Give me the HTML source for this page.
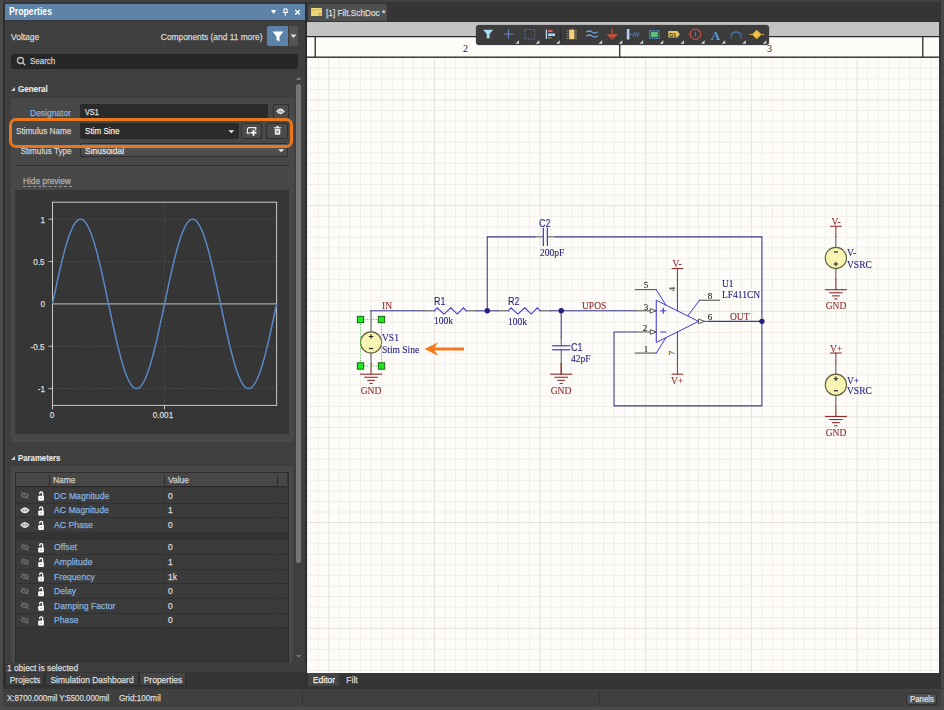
<!DOCTYPE html>
<html><head><meta charset="utf-8">
<style>
*{margin:0;padding:0;box-sizing:border-box}
html,body{width:944px;height:710px;overflow:hidden;background:#4a4a4a}
body{position:relative;font-family:"Liberation Sans",sans-serif}
.a{position:absolute}
.t{position:absolute;white-space:nowrap}
svg{position:absolute;overflow:visible}
</style></head><body>
<div class="a" style="left:0px;top:0px;width:944px;height:2px;background:#414141;"></div>
<div class="a" style="left:0px;top:2px;width:944px;height:2px;background:#363636;"></div>
<div class="a" style="left:3px;top:3px;width:2px;height:686px;background:#2f2f2f;"></div>
<div class="a" style="left:5px;top:4px;width:301px;height:668px;background:#3f3f3f;"></div>
<div class="a" style="left:5px;top:4px;width:300px;height:16px;background:#5d83a7;"></div>
<div class="a" style="left:5px;top:20px;width:300px;height:1px;background:#343a40;"></div>
<div class="a" style="left:305px;top:3px;width:2px;height:686px;background:#2d2d2d;"></div>
<div class="t" style="left:9px;top:6.45px;font:bold 10px/11.50px 'Liberation Sans';color:#ffffff;transform:scaleX(0.87);transform-origin:0 50%;">Properties</div>
<svg style="left:0;top:0" width="944" height="30">
<path d="M271 10 L276.3 10 L273.6 14 Z" fill="#ffffff"/>
<path d="M283.5 9 h4 M284 9 v3.5 M287 9 v3.5 M282.8 12.5 h5.2 M285.4 12.5 v3.2" stroke="#fff" stroke-width="1.1" fill="none"/>
<path d="M295.2 10 L299.8 14.6 M299.8 10 L295.2 14.6" stroke="#fff" stroke-width="1.4"/>
</svg>
<div class="t" style="left:11px;top:32.14px;font:normal 9.5px/10.92px 'Liberation Sans';color:#d6d6d6;transform:scaleX(0.89);transform-origin:0 50%;-webkit-text-stroke:0.25px #d6d6d6;">Voltage</div>
<div class="t" style="right:681.3px;top:31.74px;font:normal 9.5px/10.92px 'Liberation Sans';color:#d6d6d6;transform:scaleX(0.88);transform-origin:100% 50%;-webkit-text-stroke:0.25px #d6d6d6;">Components (and 11 more)</div>
<div class="a" style="left:267px;top:26px;width:21px;height:20px;background:#5b82a8;border-radius:2px 0 0 2px"></div>
<div class="a" style="left:289px;top:26px;width:9px;height:20px;background:#545454;border-radius:0 2px 2px 0"></div>
<svg style="left:0;top:0" width="944" height="60">
<path d="M272.5 31.5 h11 l-4 5 v5 l-3 -1.5 v-3.5 z" fill="#fff"/>
<path d="M290.5 34.5 h6 l-3 3.5 z" fill="#ddd"/>
</svg>
<div class="a" style="left:11px;top:54px;width:287px;height:14.7px;background:#272727;border-radius:3px"></div>
<svg style="left:0;top:0" width="100" height="80">
<circle cx="20.5" cy="60.5" r="3" stroke="#bdbdbd" stroke-width="1.3" fill="none"/>
<path d="M22.7 62.7 L25.3 65.3" stroke="#bdbdbd" stroke-width="1.5"/>
</svg>
<div class="t" style="left:30px;top:56.44px;font:normal 9.5px/10.92px 'Liberation Sans';color:#cfcfcf;transform:scaleX(0.84);transform-origin:0 50%;-webkit-text-stroke:0.25px #cfcfcf;">Search</div>
<svg style="left:0;top:0" width="310" height="700">
<path d="M296 80 L298.8 77 L301.5 80 Z" fill="#777"/>
<path d="M296 655 L298.8 658 L301.5 655 Z" fill="#777"/>
</svg>
<div class="a" style="left:296px;top:84px;width:4.6px;height:479px;background:#767676;border-radius:2.3px"></div>
<svg style="left:0;top:0" width="100" height="500">
<path d="M11 91 L15 87 L15 91 Z" fill="#cfcfcf"/>
<path d="M11 460 L15 456 L15 460 Z" fill="#cfcfcf"/>
</svg>
<div class="t" style="left:17.6px;top:84.04px;font:bold 9.5px/10.92px 'Liberation Sans';color:#e6e6e6;transform:scaleX(0.84);transform-origin:0 50%;-webkit-text-stroke:0.15px #e6e6e6;">General</div>
<div class="a" style="left:11px;top:97.5px;width:283px;height:344px;background:#484848;border-radius:3px"></div>
<div class="t" style="right:872.6px;top:107.64px;font:normal 9.5px/10.92px 'Liberation Sans';color:#8ab0dc;transform:scaleX(0.89);transform-origin:100% 50%;-webkit-text-stroke:0.25px #8ab0dc;">Designator</div>
<div class="a" style="left:80px;top:104px;width:187.8px;height:15.2px;background:#2a2a2a;border-radius:2px"></div>
<div class="t" style="left:84.5px;top:107.34px;font:normal 9.5px/10.92px 'Liberation Sans';color:#e0e0e0;transform:scaleX(0.76);transform-origin:0 50%;-webkit-text-stroke:0.25px #e0e0e0;">VS1</div>
<div class="a" style="left:272.5px;top:103.6px;width:16px;height:15.4px;background:#4b4b4b;border:1px solid #2f2f2f;border-radius:2px"></div>
<div class="t" style="right:872.8px;top:126.44px;font:normal 9.5px/10.92px 'Liberation Sans';color:#d2d2d2;transform:scaleX(0.86);transform-origin:100% 50%;-webkit-text-stroke:0.25px #d2d2d2;">Stimulus Name</div>
<div class="a" style="left:80px;top:123px;width:159px;height:16px;background:#2a2a2a;border-radius:2px"></div>
<div class="t" style="left:84.5px;top:126.34px;font:normal 9.5px/10.92px 'Liberation Sans';color:#e6e6e6;transform:scaleX(0.85);transform-origin:0 50%;-webkit-text-stroke:0.25px #e6e6e6;">Stim Sine</div>
<div class="a" style="left:240.6px;top:123.2px;width:21.6px;height:16.1px;background:#4b4b4b;border:1px solid #2f2f2f;border-radius:2px"></div>
<div class="a" style="left:266.4px;top:123.2px;width:21.8px;height:16.1px;background:#4b4b4b;border:1px solid #2f2f2f;border-radius:2px"></div>
<div class="t" style="right:872.8px;top:145.64px;font:normal 9.5px/10.92px 'Liberation Sans';color:#d2d2d2;transform:scaleX(0.855);transform-origin:100% 50%;-webkit-text-stroke:0.25px #d2d2d2;">Stimulus Type</div>
<div class="a" style="left:80px;top:143px;width:208px;height:14.4px;background:linear-gradient(#575757,#4a4a4a);border:1px solid #2f2f2f;border-radius:2px"></div>
<div class="t" style="left:84.5px;top:145.64px;font:normal 9.5px/10.92px 'Liberation Sans';color:#e0e0e0;transform:scaleX(0.89);transform-origin:0 50%;-webkit-text-stroke:0.25px #e0e0e0;">Sinusoidal</div>
<svg style="left:0;top:0" width="310" height="200">
<path d="M228.3 130.2 h6 l-3 3 z" fill="#e8e8e8"/>
<path d="M278.2 149.2 h6 l-3 3 z" fill="#e8e8e8"/>
<path d="M277.1 111.4 q3.4 -4.2 6.8 0 q-3.4 4.2 -6.8 0 z" stroke="#eaeaea" stroke-width="1.4" fill="none"/>
<circle cx="280.5" cy="111.4" r="1.3" stroke="#eaeaea" stroke-width="0.8" fill="#999"/>
<path d="M248.5 127.6 h7.2 v3 M247.4 128.8 v4.4 h2.5 M247.4 128.8 l1.1 -1.2" stroke="#eee" stroke-width="1.2" fill="none"/>
<path d="M250.6 132.7 h5.8 M253.5 129.7 v6" stroke="#fff" stroke-width="1.7"/>
<path d="M274 127.8 h7 M276.5 126.6 h2.2" stroke="#eee" stroke-width="1.1"/>
<path d="M274.8 128.8 h5.5 v5.9 h-5.5 z" fill="#eee"/>
<rect x="276.4" y="130.6" width="2.2" height="2.4" fill="#8a8a8a"/>
</svg>
<div class="a" style="left:9.3px;top:117.7px;width:284.2px;height:30.5px;border:3.5px solid #ea761d;border-radius:7px"></div>
<div class="a" style="left:15.5px;top:165px;width:273.5px;height:1px;background:#303030;"></div>
<div class="t" style="left:23px;top:176.14px;font:normal 9.5px/10.92px 'Liberation Sans';color:#b0b0b0;transform:scaleX(0.87);transform-origin:0 50%;-webkit-text-stroke:0.25px #b0b0b0;">Hide preview</div>
<div class="a" style="left:23px;top:185.5px;width:49px;height:1px;border-top:1px dashed #9a9a9a"></div>
<div class="a" style="left:15.4px;top:190.4px;width:274.1px;height:243.2px;background:#363636;"></div>
<svg style="left:0;top:0" width="300" height="440">
<path d="M52.5 219.20 H276.6" stroke="#4b4b4b" stroke-width="1" stroke-dasharray="2 1.6"/><path d="M48.5 219.20 H52.5" stroke="#bdbdbd" stroke-width="1"/><path d="M52.5 261.55 H276.6" stroke="#4b4b4b" stroke-width="1" stroke-dasharray="2 1.6"/><path d="M48.5 261.55 H52.5" stroke="#bdbdbd" stroke-width="1"/><path d="M52.5 346.25 H276.6" stroke="#4b4b4b" stroke-width="1" stroke-dasharray="2 1.6"/><path d="M48.5 346.25 H52.5" stroke="#bdbdbd" stroke-width="1"/><path d="M52.5 388.60 H276.6" stroke="#4b4b4b" stroke-width="1" stroke-dasharray="2 1.6"/><path d="M48.5 388.60 H52.5" stroke="#bdbdbd" stroke-width="1"/><path d="M164.5 202.2 V405.4" stroke="#4b4b4b" stroke-width="1" stroke-dasharray="2 1.6"/><path d="M52.5 303.9 H276.6" stroke="#a8a8a8" stroke-width="1.3"/>
<rect x="52.5" y="202.2" width="224.10" height="203.20" stroke="#c8c8c8" stroke-width="1" fill="none"/>
<path d="M52.5 405.4 v4 M164.5 405.4 v4" stroke="#c8c8c8" stroke-width="1"/>
<polyline points="52.50,303.90 53.25,300.35 53.99,296.81 54.74,293.28 55.49,289.77 56.23,286.29 56.98,282.84 57.73,279.42 58.48,276.04 59.22,272.72 59.97,269.45 60.72,266.24 61.46,263.10 62.21,260.02 62.96,257.03 63.70,254.11 64.45,251.29 65.20,248.56 65.95,245.92 66.69,243.38 67.44,240.96 68.19,238.64 68.93,236.43 69.68,234.35 70.43,232.39 71.18,230.55 71.92,228.84 72.67,227.26 73.42,225.82 74.16,224.51 74.91,223.35 75.66,222.32 76.40,221.44 77.15,220.70 77.90,220.11 78.65,219.66 79.39,219.37 80.14,219.22 80.89,219.22 81.63,219.37 82.38,219.66 83.13,220.11 83.87,220.70 84.62,221.44 85.37,222.32 86.12,223.35 86.86,224.51 87.61,225.82 88.36,227.26 89.10,228.84 89.85,230.55 90.60,232.39 91.34,234.35 92.09,236.43 92.84,238.64 93.59,240.96 94.33,243.38 95.08,245.92 95.83,248.56 96.57,251.29 97.32,254.11 98.07,257.03 98.81,260.02 99.56,263.10 100.31,266.24 101.06,269.45 101.80,272.72 102.55,276.04 103.30,279.42 104.04,282.84 104.79,286.29 105.54,289.77 106.28,293.28 107.03,296.81 107.78,300.35 108.53,303.90 109.27,307.45 110.02,310.99 110.77,314.52 111.51,318.03 112.26,321.51 113.01,324.96 113.75,328.38 114.50,331.76 115.25,335.08 116.00,338.35 116.74,341.56 117.49,344.70 118.24,347.78 118.98,350.77 119.73,353.69 120.48,356.51 121.22,359.24 121.97,361.88 122.72,364.42 123.47,366.84 124.21,369.16 124.96,371.37 125.71,373.45 126.45,375.41 127.20,377.25 127.95,378.96 128.69,380.54 129.44,381.98 130.19,383.29 130.94,384.45 131.68,385.48 132.43,386.36 133.18,387.10 133.92,387.69 134.67,388.14 135.42,388.43 136.16,388.58 136.91,388.58 137.66,388.43 138.41,388.14 139.15,387.69 139.90,387.10 140.65,386.36 141.39,385.48 142.14,384.45 142.89,383.29 143.63,381.98 144.38,380.54 145.13,378.96 145.88,377.25 146.62,375.41 147.37,373.45 148.12,371.37 148.86,369.16 149.61,366.84 150.36,364.42 151.10,361.88 151.85,359.24 152.60,356.51 153.35,353.69 154.09,350.77 154.84,347.78 155.59,344.70 156.33,341.56 157.08,338.35 157.83,335.08 158.57,331.76 159.32,328.38 160.07,324.96 160.81,321.51 161.56,318.03 162.31,314.52 163.06,310.99 163.80,307.45 164.55,303.90 165.30,300.35 166.04,296.81 166.79,293.28 167.54,289.77 168.28,286.29 169.03,282.84 169.78,279.42 170.53,276.04 171.27,272.72 172.02,269.45 172.77,266.24 173.51,263.10 174.26,260.02 175.01,257.03 175.76,254.11 176.50,251.29 177.25,248.56 178.00,245.92 178.74,243.38 179.49,240.96 180.24,238.64 180.98,236.43 181.73,234.35 182.48,232.39 183.23,230.55 183.97,228.84 184.72,227.26 185.47,225.82 186.21,224.51 186.96,223.35 187.71,222.32 188.45,221.44 189.20,220.70 189.95,220.11 190.70,219.66 191.44,219.37 192.19,219.22 192.94,219.22 193.68,219.37 194.43,219.66 195.18,220.11 195.92,220.70 196.67,221.44 197.42,222.32 198.17,223.35 198.91,224.51 199.66,225.82 200.41,227.26 201.15,228.84 201.90,230.55 202.65,232.39 203.39,234.35 204.14,236.43 204.89,238.64 205.64,240.96 206.38,243.38 207.13,245.92 207.88,248.56 208.62,251.29 209.37,254.11 210.12,257.03 210.86,260.02 211.61,263.10 212.36,266.24 213.11,269.45 213.85,272.72 214.60,276.04 215.35,279.42 216.09,282.84 216.84,286.29 217.59,289.77 218.33,293.28 219.08,296.81 219.83,300.35 220.58,303.90 221.32,307.45 222.07,310.99 222.82,314.52 223.56,318.03 224.31,321.51 225.06,324.96 225.80,328.38 226.55,331.76 227.30,335.08 228.05,338.35 228.79,341.56 229.54,344.70 230.29,347.78 231.03,350.77 231.78,353.69 232.53,356.51 233.27,359.24 234.02,361.88 234.77,364.42 235.52,366.84 236.26,369.16 237.01,371.37 237.76,373.45 238.50,375.41 239.25,377.25 240.00,378.96 240.74,380.54 241.49,381.98 242.24,383.29 242.99,384.45 243.73,385.48 244.48,386.36 245.23,387.10 245.97,387.69 246.72,388.14 247.47,388.43 248.21,388.58 248.96,388.58 249.71,388.43 250.46,388.14 251.20,387.69 251.95,387.10 252.70,386.36 253.44,385.48 254.19,384.45 254.94,383.29 255.68,381.98 256.43,380.54 257.18,378.96 257.93,377.25 258.67,375.41 259.42,373.45 260.17,371.37 260.91,369.16 261.66,366.84 262.41,364.42 263.15,361.88 263.90,359.24 264.65,356.51 265.39,353.69 266.14,350.77 266.89,347.78 267.64,344.70 268.38,341.56 269.13,338.35 269.88,335.08 270.62,331.76 271.37,328.38 272.12,324.96 272.87,321.51 273.61,318.03 274.36,314.52 275.11,310.99 275.85,307.45 276.60,303.90" stroke="#5a87c4" stroke-width="1.5" fill="none"/>
</svg>
<div class="t" style="right:899.4px;top:214.62px;font:normal 9px/10.35px 'Liberation Sans';color:#dcdcdc;transform:scaleX(0.9);transform-origin:100% 50%;-webkit-text-stroke:0.25px #dcdcdc;">1</div>
<div class="t" style="right:899.4px;top:256.97px;font:normal 9px/10.35px 'Liberation Sans';color:#dcdcdc;transform:scaleX(0.9);transform-origin:100% 50%;-webkit-text-stroke:0.25px #dcdcdc;">0.5</div>
<div class="t" style="right:899.4px;top:299.32px;font:normal 9px/10.35px 'Liberation Sans';color:#dcdcdc;transform:scaleX(0.9);transform-origin:100% 50%;-webkit-text-stroke:0.25px #dcdcdc;">0</div>
<div class="t" style="right:899.4px;top:341.68px;font:normal 9px/10.35px 'Liberation Sans';color:#dcdcdc;transform:scaleX(0.9);transform-origin:100% 50%;-webkit-text-stroke:0.25px #dcdcdc;">-0.5</div>
<div class="t" style="right:899.4px;top:384.02px;font:normal 9px/10.35px 'Liberation Sans';color:#dcdcdc;transform:scaleX(0.9);transform-origin:100% 50%;-webkit-text-stroke:0.25px #dcdcdc;">-1</div>
<div class="t" style="left:51.5px;top:410.43px;font:normal 9px/10.35px 'Liberation Sans';color:#dcdcdc;transform:translateX(-50%) scaleX(0.9);transform-origin:50% 50%;-webkit-text-stroke:0.25px #dcdcdc;">0</div>
<div class="t" style="left:163px;top:410.43px;font:normal 9px/10.35px 'Liberation Sans';color:#dcdcdc;transform:translateX(-50%) scaleX(0.9);transform-origin:50% 50%;-webkit-text-stroke:0.25px #dcdcdc;">0.001</div>
<div class="t" style="left:18px;top:452.94px;font:bold 9.5px/10.92px 'Liberation Sans';color:#e6e6e6;transform:scaleX(0.82);transform-origin:0 50%;-webkit-text-stroke:0.15px #e6e6e6;">Parameters</div>
<div class="a" style="left:11px;top:466px;width:282px;height:197px;background:#484848;border-radius:3px 3px 0 0"></div>
<div class="a" style="left:15.4px;top:472px;width:273.4px;height:191px;background:#363636;border:1px solid #2e2e2e;border-bottom:none"></div>
<div class="a" style="left:16.4px;top:473px;width:270.9px;height:14.2px;background:#474747;border-bottom:1px solid #2b2b2b"></div>
<div class="a" style="left:48.5px;top:475px;width:1px;height:11px;background:#2b2b2b;"></div>
<div class="a" style="left:163.8px;top:475px;width:1px;height:11px;background:#2b2b2b;"></div>
<div class="a" style="left:277.4px;top:475px;width:1px;height:11px;background:#2b2b2b;"></div>
<div class="t" style="left:53px;top:475.14px;font:normal 9.5px/10.92px 'Liberation Sans';color:#d0d0d0;transform:scaleX(0.89);transform-origin:0 50%;-webkit-text-stroke:0.25px #d0d0d0;">Name</div>
<div class="t" style="left:167.5px;top:475.14px;font:normal 9.5px/10.92px 'Liberation Sans';color:#d0d0d0;transform:scaleX(0.89);transform-origin:0 50%;-webkit-text-stroke:0.25px #d0d0d0;">Value</div>
<div class="a" style="left:16.4px;top:488.2px;width:271.4px;height:14.6px;background:#3b3b3b;"></div>
<div class="a" style="left:16.4px;top:503.0px;width:271.4px;height:14.6px;background:#3b3b3b;"></div>
<div class="a" style="left:16.4px;top:517.6px;width:271.4px;height:14.6px;background:#3b3b3b;"></div>
<div class="a" style="left:16.4px;top:539.9000000000001px;width:271.4px;height:14.6px;background:#3b3b3b;"></div>
<div class="a" style="left:16.4px;top:554.4000000000001px;width:271.4px;height:14.6px;background:#3b3b3b;"></div>
<div class="a" style="left:16.4px;top:569.1px;width:271.4px;height:14.6px;background:#3b3b3b;"></div>
<div class="a" style="left:16.4px;top:583.7px;width:271.4px;height:14.6px;background:#3b3b3b;"></div>
<div class="a" style="left:16.4px;top:598.3000000000001px;width:271.4px;height:14.6px;background:#3b3b3b;"></div>
<div class="a" style="left:16.4px;top:613.0px;width:271.4px;height:14.6px;background:#3b3b3b;"></div>
<div class="a" style="left:16.4px;top:502.5px;width:271.4px;height:1px;background:#313131;"></div>
<div class="a" style="left:164px;top:488.2px;width:1px;height:14.6px;background:#353535;"></div>
<div class="a" style="left:277.4px;top:488.2px;width:1px;height:14.6px;background:#363636;"></div>
<div class="a" style="left:16.4px;top:517.3px;width:271.4px;height:1px;background:#313131;"></div>
<div class="a" style="left:164px;top:503.0px;width:1px;height:14.6px;background:#353535;"></div>
<div class="a" style="left:277.4px;top:503.0px;width:1px;height:14.6px;background:#363636;"></div>
<div class="a" style="left:16.4px;top:531.9px;width:271.4px;height:1px;background:#313131;"></div>
<div class="a" style="left:164px;top:517.6px;width:1px;height:14.6px;background:#353535;"></div>
<div class="a" style="left:277.4px;top:517.6px;width:1px;height:14.6px;background:#363636;"></div>
<div class="a" style="left:16.4px;top:554.2px;width:271.4px;height:1px;background:#313131;"></div>
<div class="a" style="left:164px;top:539.9000000000001px;width:1px;height:14.6px;background:#353535;"></div>
<div class="a" style="left:277.4px;top:539.9000000000001px;width:1px;height:14.6px;background:#363636;"></div>
<div class="a" style="left:16.4px;top:568.7px;width:271.4px;height:1px;background:#313131;"></div>
<div class="a" style="left:164px;top:554.4000000000001px;width:1px;height:14.6px;background:#353535;"></div>
<div class="a" style="left:277.4px;top:554.4000000000001px;width:1px;height:14.6px;background:#363636;"></div>
<div class="a" style="left:16.4px;top:583.4px;width:271.4px;height:1px;background:#313131;"></div>
<div class="a" style="left:164px;top:569.1px;width:1px;height:14.6px;background:#353535;"></div>
<div class="a" style="left:277.4px;top:569.1px;width:1px;height:14.6px;background:#363636;"></div>
<div class="a" style="left:16.4px;top:598.0px;width:271.4px;height:1px;background:#313131;"></div>
<div class="a" style="left:164px;top:583.7px;width:1px;height:14.6px;background:#353535;"></div>
<div class="a" style="left:277.4px;top:583.7px;width:1px;height:14.6px;background:#363636;"></div>
<div class="a" style="left:16.4px;top:612.6px;width:271.4px;height:1px;background:#313131;"></div>
<div class="a" style="left:164px;top:598.3000000000001px;width:1px;height:14.6px;background:#353535;"></div>
<div class="a" style="left:277.4px;top:598.3000000000001px;width:1px;height:14.6px;background:#363636;"></div>
<div class="a" style="left:16.4px;top:627.3px;width:271.4px;height:1px;background:#313131;"></div>
<div class="a" style="left:164px;top:613.0px;width:1px;height:14.6px;background:#353535;"></div>
<div class="a" style="left:277.4px;top:613.0px;width:1px;height:14.6px;background:#363636;"></div>
<div class="t" style="left:53.5px;top:490.64px;font:normal 9.5px/10.92px 'Liberation Sans';color:#8ab0dc;transform:scaleX(0.91);transform-origin:0 50%;-webkit-text-stroke:0.25px #8ab0dc;">DC Magnitude</div>
<div class="t" style="left:167.5px;top:490.64px;font:normal 9.5px/10.92px 'Liberation Sans';color:#dedede;transform:scaleX(0.89);transform-origin:0 50%;-webkit-text-stroke:0.25px #dedede;">0</div>
<div class="t" style="left:53.5px;top:505.44px;font:normal 9.5px/10.92px 'Liberation Sans';color:#8ab0dc;transform:scaleX(0.91);transform-origin:0 50%;-webkit-text-stroke:0.25px #8ab0dc;">AC Magnitude</div>
<div class="t" style="left:167.5px;top:505.44px;font:normal 9.5px/10.92px 'Liberation Sans';color:#dedede;transform:scaleX(0.89);transform-origin:0 50%;-webkit-text-stroke:0.25px #dedede;">1</div>
<div class="t" style="left:53.5px;top:520.04px;font:normal 9.5px/10.92px 'Liberation Sans';color:#8ab0dc;transform:scaleX(0.91);transform-origin:0 50%;-webkit-text-stroke:0.25px #8ab0dc;">AC Phase</div>
<div class="t" style="left:167.5px;top:520.04px;font:normal 9.5px/10.92px 'Liberation Sans';color:#dedede;transform:scaleX(0.89);transform-origin:0 50%;-webkit-text-stroke:0.25px #dedede;">0</div>
<div class="t" style="left:53.5px;top:542.34px;font:normal 9.5px/10.92px 'Liberation Sans';color:#8ab0dc;transform:scaleX(0.91);transform-origin:0 50%;-webkit-text-stroke:0.25px #8ab0dc;">Offset</div>
<div class="t" style="left:167.5px;top:542.34px;font:normal 9.5px/10.92px 'Liberation Sans';color:#dedede;transform:scaleX(0.89);transform-origin:0 50%;-webkit-text-stroke:0.25px #dedede;">0</div>
<div class="t" style="left:53.5px;top:556.84px;font:normal 9.5px/10.92px 'Liberation Sans';color:#8ab0dc;transform:scaleX(0.91);transform-origin:0 50%;-webkit-text-stroke:0.25px #8ab0dc;">Amplitude</div>
<div class="t" style="left:167.5px;top:556.84px;font:normal 9.5px/10.92px 'Liberation Sans';color:#dedede;transform:scaleX(0.89);transform-origin:0 50%;-webkit-text-stroke:0.25px #dedede;">1</div>
<div class="t" style="left:53.5px;top:571.54px;font:normal 9.5px/10.92px 'Liberation Sans';color:#8ab0dc;transform:scaleX(0.91);transform-origin:0 50%;-webkit-text-stroke:0.25px #8ab0dc;">Frequency</div>
<div class="t" style="left:167.5px;top:571.54px;font:normal 9.5px/10.92px 'Liberation Sans';color:#dedede;transform:scaleX(0.89);transform-origin:0 50%;-webkit-text-stroke:0.25px #dedede;">1k</div>
<div class="t" style="left:53.5px;top:586.14px;font:normal 9.5px/10.92px 'Liberation Sans';color:#8ab0dc;transform:scaleX(0.91);transform-origin:0 50%;-webkit-text-stroke:0.25px #8ab0dc;">Delay</div>
<div class="t" style="left:167.5px;top:586.14px;font:normal 9.5px/10.92px 'Liberation Sans';color:#dedede;transform:scaleX(0.89);transform-origin:0 50%;-webkit-text-stroke:0.25px #dedede;">0</div>
<div class="t" style="left:53.5px;top:600.74px;font:normal 9.5px/10.92px 'Liberation Sans';color:#8ab0dc;transform:scaleX(0.91);transform-origin:0 50%;-webkit-text-stroke:0.25px #8ab0dc;">Damping Factor</div>
<div class="t" style="left:167.5px;top:600.74px;font:normal 9.5px/10.92px 'Liberation Sans';color:#dedede;transform:scaleX(0.89);transform-origin:0 50%;-webkit-text-stroke:0.25px #dedede;">0</div>
<div class="t" style="left:53.5px;top:615.44px;font:normal 9.5px/10.92px 'Liberation Sans';color:#8ab0dc;transform:scaleX(0.91);transform-origin:0 50%;-webkit-text-stroke:0.25px #8ab0dc;">Phase</div>
<div class="t" style="left:167.5px;top:615.44px;font:normal 9.5px/10.92px 'Liberation Sans';color:#dedede;transform:scaleX(0.89);transform-origin:0 50%;-webkit-text-stroke:0.25px #dedede;">0</div>
<div class="a" style="left:16.4px;top:531.8px;width:270.9px;height:7.9px;background:#333333;"></div>
<svg style="left:0;top:0" width="300" height="640"><path d="M21.3 495.50 q3.6 -4.2 7.2 0 q-3.6 4.2 -7.2 0 z" stroke="#6a6a6a" stroke-width="1.3" fill="none"/><path d="M21.6 491.90 L28.4 499.10" stroke="#6a6a6a" stroke-width="1.1"/><path d="M39.7 494.30 v-0.8 a1.5 1.5 0 0 1 3 0 v3" stroke="#fff" stroke-width="1.3" fill="none"/><rect x="38.2" y="495.70" width="5.7" height="5" rx="1" fill="#fff"/><rect x="40.5" y="497.60" width="1.2" height="1.3" fill="#888"/><path d="M21.1 510.30 q3.8 -4.6 7.6 0 q-3.8 4.6 -7.6 0 z" stroke="#f0f0f0" stroke-width="1.4" fill="none"/><circle cx="24.9" cy="510.30" r="1.3" stroke="#f0f0f0" stroke-width="0.8" fill="#aaa"/><path d="M39.7 509.10 v-0.8 a1.5 1.5 0 0 1 3 0 v3" stroke="#fff" stroke-width="1.3" fill="none"/><rect x="38.2" y="510.50" width="5.7" height="5" rx="1" fill="#fff"/><rect x="40.5" y="512.40" width="1.2" height="1.3" fill="#888"/><path d="M21.1 524.90 q3.8 -4.6 7.6 0 q-3.8 4.6 -7.6 0 z" stroke="#f0f0f0" stroke-width="1.4" fill="none"/><circle cx="24.9" cy="524.90" r="1.3" stroke="#f0f0f0" stroke-width="0.8" fill="#aaa"/><path d="M39.7 523.70 v-0.8 a1.5 1.5 0 0 1 3 0 v3" stroke="#fff" stroke-width="1.3" fill="none"/><rect x="38.2" y="525.10" width="5.7" height="5" rx="1" fill="#fff"/><rect x="40.5" y="527.00" width="1.2" height="1.3" fill="#888"/><path d="M21.3 547.20 q3.6 -4.2 7.2 0 q-3.6 4.2 -7.2 0 z" stroke="#6a6a6a" stroke-width="1.3" fill="none"/><path d="M21.6 543.60 L28.4 550.80" stroke="#6a6a6a" stroke-width="1.1"/><path d="M39.7 546.00 v-0.8 a1.5 1.5 0 0 1 3 0 v3" stroke="#fff" stroke-width="1.3" fill="none"/><rect x="38.2" y="547.40" width="5.7" height="5" rx="1" fill="#fff"/><rect x="40.5" y="549.30" width="1.2" height="1.3" fill="#888"/><path d="M21.3 561.70 q3.6 -4.2 7.2 0 q-3.6 4.2 -7.2 0 z" stroke="#6a6a6a" stroke-width="1.3" fill="none"/><path d="M21.6 558.10 L28.4 565.30" stroke="#6a6a6a" stroke-width="1.1"/><path d="M39.7 560.50 v-0.8 a1.5 1.5 0 0 1 3 0 v3" stroke="#fff" stroke-width="1.3" fill="none"/><rect x="38.2" y="561.90" width="5.7" height="5" rx="1" fill="#fff"/><rect x="40.5" y="563.80" width="1.2" height="1.3" fill="#888"/><path d="M21.3 576.40 q3.6 -4.2 7.2 0 q-3.6 4.2 -7.2 0 z" stroke="#6a6a6a" stroke-width="1.3" fill="none"/><path d="M21.6 572.80 L28.4 580.00" stroke="#6a6a6a" stroke-width="1.1"/><path d="M39.7 575.20 v-0.8 a1.5 1.5 0 0 1 3 0 v3" stroke="#fff" stroke-width="1.3" fill="none"/><rect x="38.2" y="576.60" width="5.7" height="5" rx="1" fill="#fff"/><rect x="40.5" y="578.50" width="1.2" height="1.3" fill="#888"/><path d="M21.3 591.00 q3.6 -4.2 7.2 0 q-3.6 4.2 -7.2 0 z" stroke="#6a6a6a" stroke-width="1.3" fill="none"/><path d="M21.6 587.40 L28.4 594.60" stroke="#6a6a6a" stroke-width="1.1"/><path d="M39.7 589.80 v-0.8 a1.5 1.5 0 0 1 3 0 v3" stroke="#fff" stroke-width="1.3" fill="none"/><rect x="38.2" y="591.20" width="5.7" height="5" rx="1" fill="#fff"/><rect x="40.5" y="593.10" width="1.2" height="1.3" fill="#888"/><path d="M21.3 605.60 q3.6 -4.2 7.2 0 q-3.6 4.2 -7.2 0 z" stroke="#6a6a6a" stroke-width="1.3" fill="none"/><path d="M21.6 602.00 L28.4 609.20" stroke="#6a6a6a" stroke-width="1.1"/><path d="M39.7 604.40 v-0.8 a1.5 1.5 0 0 1 3 0 v3" stroke="#fff" stroke-width="1.3" fill="none"/><rect x="38.2" y="605.80" width="5.7" height="5" rx="1" fill="#fff"/><rect x="40.5" y="607.70" width="1.2" height="1.3" fill="#888"/><path d="M21.3 620.30 q3.6 -4.2 7.2 0 q-3.6 4.2 -7.2 0 z" stroke="#6a6a6a" stroke-width="1.3" fill="none"/><path d="M21.6 616.70 L28.4 623.90" stroke="#6a6a6a" stroke-width="1.1"/><path d="M39.7 619.10 v-0.8 a1.5 1.5 0 0 1 3 0 v3" stroke="#fff" stroke-width="1.3" fill="none"/><rect x="38.2" y="620.50" width="5.7" height="5" rx="1" fill="#fff"/><rect x="40.5" y="622.40" width="1.2" height="1.3" fill="#888"/></svg>
<div class="a" style="left:5px;top:663px;width:301px;height:9px;background:#3d3d3d;"></div>
<div class="t" style="left:7.4px;top:663.14px;font:normal 9.5px/10.92px 'Liberation Sans';color:#dcdcdc;transform:scaleX(0.88);transform-origin:0 50%;-webkit-text-stroke:0.25px #dcdcdc;">1 object is selected</div>
<div class="a" style="left:5px;top:672px;width:301px;height:16px;background:#353535;"></div>
<div class="a" style="left:5px;top:672.5px;width:39px;height:13.5px;background:#3e3e3e;border:1px solid #2b2b2b;border-top:none;border-radius:0 0 2px 2px"></div>
<div class="t" style="left:24.5px;top:674.64px;font:normal 9.5px/10.92px 'Liberation Sans';color:#dddddd;transform:translateX(-50%) scaleX(0.89);transform-origin:50% 50%;-webkit-text-stroke:0.25px #dddddd;">Projects</div>
<div class="a" style="left:44.5px;top:672.5px;width:94.0px;height:13.5px;background:#3e3e3e;border:1px solid #2b2b2b;border-top:none;border-radius:0 0 2px 2px"></div>
<div class="t" style="left:91.5px;top:674.64px;font:normal 9.5px/10.92px 'Liberation Sans';color:#dddddd;transform:translateX(-50%) scaleX(0.89);transform-origin:50% 50%;-webkit-text-stroke:0.25px #dddddd;">Simulation Dashboard</div>
<div class="a" style="left:139px;top:672.5px;width:47px;height:13.5px;background:#444444;border:1px solid #2b2b2b;border-top:none;border-radius:0 0 2px 2px"></div>
<div class="t" style="left:162.5px;top:674.64px;font:normal 9.5px/10.92px 'Liberation Sans';color:#dddddd;transform:translateX(-50%) scaleX(0.89);transform-origin:50% 50%;-webkit-text-stroke:0.25px #dddddd;">Properties</div>
<div class="a" style="left:307px;top:4px;width:637px;height:685px;background:#353535;"></div>
<div class="a" style="left:308px;top:4.2px;width:79px;height:16.8px;background:#4f4f4f;border-radius:3px 3px 0 0"></div>
<svg style="left:0;top:0" width="400" height="30">
<rect x="311" y="8" width="11" height="8" fill="#f0d57a" rx="0.5"/>
<path d="M311 10.5 h5 l1 -1 h5" stroke="#c9a94a" stroke-width="0.7" fill="none"/>
<path d="M318 13.5 h3.5 M318 15 h3.5" stroke="#b89840" stroke-width="0.7"/>
</svg>
<div class="t" style="left:325.5px;top:7.94px;font:normal 9.5px/10.92px 'Liberation Sans';color:#dcdcdc;transform:scaleX(0.87);transform-origin:0 50%;-webkit-text-stroke:0.25px #dcdcdc;">[1] Filt.SchDoc *</div>
<div class="a" style="left:307px;top:21.7px;width:632px;height:651px;background:#fdfcf9;"></div>
<div class="a" style="left:307px;top:21.7px;width:632px;height:14.8px;background:#c3c3c3;"></div>
<svg style="left:0;top:0" width="944" height="710"><path d="M307.67 57.5 V672" stroke="#f1eeea" stroke-width="1"/><path d="M318.24 57.5 V672" stroke="#f1eeea" stroke-width="1"/><path d="M328.80 57.5 V672" stroke="#e4e1dc" stroke-width="1"/><path d="M339.36 57.5 V672" stroke="#f1eeea" stroke-width="1"/><path d="M349.93 57.5 V672" stroke="#f1eeea" stroke-width="1"/><path d="M360.49 57.5 V672" stroke="#f1eeea" stroke-width="1"/><path d="M371.06 57.5 V672" stroke="#f1eeea" stroke-width="1"/><path d="M381.62 57.5 V672" stroke="#f1eeea" stroke-width="1"/><path d="M392.18 57.5 V672" stroke="#f1eeea" stroke-width="1"/><path d="M402.75 57.5 V672" stroke="#f1eeea" stroke-width="1"/><path d="M413.31 57.5 V672" stroke="#f1eeea" stroke-width="1"/><path d="M423.88 57.5 V672" stroke="#f1eeea" stroke-width="1"/><path d="M434.44 57.5 V672" stroke="#e4e1dc" stroke-width="1"/><path d="M445.00 57.5 V672" stroke="#f1eeea" stroke-width="1"/><path d="M455.57 57.5 V672" stroke="#f1eeea" stroke-width="1"/><path d="M466.13 57.5 V672" stroke="#f1eeea" stroke-width="1"/><path d="M476.70 57.5 V672" stroke="#f1eeea" stroke-width="1"/><path d="M487.26 57.5 V672" stroke="#f1eeea" stroke-width="1"/><path d="M497.82 57.5 V672" stroke="#f1eeea" stroke-width="1"/><path d="M508.39 57.5 V672" stroke="#f1eeea" stroke-width="1"/><path d="M518.95 57.5 V672" stroke="#f1eeea" stroke-width="1"/><path d="M529.52 57.5 V672" stroke="#f1eeea" stroke-width="1"/><path d="M540.08 57.5 V672" stroke="#e4e1dc" stroke-width="1"/><path d="M550.64 57.5 V672" stroke="#f1eeea" stroke-width="1"/><path d="M561.21 57.5 V672" stroke="#f1eeea" stroke-width="1"/><path d="M571.77 57.5 V672" stroke="#f1eeea" stroke-width="1"/><path d="M582.34 57.5 V672" stroke="#f1eeea" stroke-width="1"/><path d="M592.90 57.5 V672" stroke="#f1eeea" stroke-width="1"/><path d="M603.46 57.5 V672" stroke="#f1eeea" stroke-width="1"/><path d="M614.03 57.5 V672" stroke="#f1eeea" stroke-width="1"/><path d="M624.59 57.5 V672" stroke="#f1eeea" stroke-width="1"/><path d="M635.16 57.5 V672" stroke="#f1eeea" stroke-width="1"/><path d="M645.72 57.5 V672" stroke="#e4e1dc" stroke-width="1"/><path d="M656.28 57.5 V672" stroke="#f1eeea" stroke-width="1"/><path d="M666.85 57.5 V672" stroke="#f1eeea" stroke-width="1"/><path d="M677.41 57.5 V672" stroke="#f1eeea" stroke-width="1"/><path d="M687.98 57.5 V672" stroke="#f1eeea" stroke-width="1"/><path d="M698.54 57.5 V672" stroke="#f1eeea" stroke-width="1"/><path d="M709.10 57.5 V672" stroke="#f1eeea" stroke-width="1"/><path d="M719.67 57.5 V672" stroke="#f1eeea" stroke-width="1"/><path d="M730.23 57.5 V672" stroke="#f1eeea" stroke-width="1"/><path d="M740.80 57.5 V672" stroke="#f1eeea" stroke-width="1"/><path d="M751.36 57.5 V672" stroke="#e4e1dc" stroke-width="1"/><path d="M761.92 57.5 V672" stroke="#f1eeea" stroke-width="1"/><path d="M772.49 57.5 V672" stroke="#f1eeea" stroke-width="1"/><path d="M783.05 57.5 V672" stroke="#f1eeea" stroke-width="1"/><path d="M793.62 57.5 V672" stroke="#f1eeea" stroke-width="1"/><path d="M804.18 57.5 V672" stroke="#f1eeea" stroke-width="1"/><path d="M814.74 57.5 V672" stroke="#f1eeea" stroke-width="1"/><path d="M825.31 57.5 V672" stroke="#f1eeea" stroke-width="1"/><path d="M835.87 57.5 V672" stroke="#f1eeea" stroke-width="1"/><path d="M846.44 57.5 V672" stroke="#f1eeea" stroke-width="1"/><path d="M857.00 57.5 V672" stroke="#e4e1dc" stroke-width="1"/><path d="M867.56 57.5 V672" stroke="#f1eeea" stroke-width="1"/><path d="M878.13 57.5 V672" stroke="#f1eeea" stroke-width="1"/><path d="M888.69 57.5 V672" stroke="#f1eeea" stroke-width="1"/><path d="M899.26 57.5 V672" stroke="#f1eeea" stroke-width="1"/><path d="M909.82 57.5 V672" stroke="#f1eeea" stroke-width="1"/><path d="M920.38 57.5 V672" stroke="#f1eeea" stroke-width="1"/><path d="M930.95 57.5 V672" stroke="#f1eeea" stroke-width="1"/><path d="M307 57.76 H939" stroke="#f1eeea" stroke-width="1"/><path d="M307 68.33 H939" stroke="#f1eeea" stroke-width="1"/><path d="M307 78.89 H939" stroke="#f1eeea" stroke-width="1"/><path d="M307 89.46 H939" stroke="#f1eeea" stroke-width="1"/><path d="M307 100.02 H939" stroke="#e4e1dc" stroke-width="1"/><path d="M307 110.58 H939" stroke="#f1eeea" stroke-width="1"/><path d="M307 121.15 H939" stroke="#f1eeea" stroke-width="1"/><path d="M307 131.71 H939" stroke="#f1eeea" stroke-width="1"/><path d="M307 142.28 H939" stroke="#f1eeea" stroke-width="1"/><path d="M307 152.84 H939" stroke="#f1eeea" stroke-width="1"/><path d="M307 163.40 H939" stroke="#f1eeea" stroke-width="1"/><path d="M307 173.97 H939" stroke="#f1eeea" stroke-width="1"/><path d="M307 184.53 H939" stroke="#f1eeea" stroke-width="1"/><path d="M307 195.10 H939" stroke="#f1eeea" stroke-width="1"/><path d="M307 205.66 H939" stroke="#e4e1dc" stroke-width="1"/><path d="M307 216.22 H939" stroke="#f1eeea" stroke-width="1"/><path d="M307 226.79 H939" stroke="#f1eeea" stroke-width="1"/><path d="M307 237.35 H939" stroke="#f1eeea" stroke-width="1"/><path d="M307 247.92 H939" stroke="#f1eeea" stroke-width="1"/><path d="M307 258.48 H939" stroke="#f1eeea" stroke-width="1"/><path d="M307 269.04 H939" stroke="#f1eeea" stroke-width="1"/><path d="M307 279.61 H939" stroke="#f1eeea" stroke-width="1"/><path d="M307 290.17 H939" stroke="#f1eeea" stroke-width="1"/><path d="M307 300.74 H939" stroke="#f1eeea" stroke-width="1"/><path d="M307 311.30 H939" stroke="#e4e1dc" stroke-width="1"/><path d="M307 321.86 H939" stroke="#f1eeea" stroke-width="1"/><path d="M307 332.43 H939" stroke="#f1eeea" stroke-width="1"/><path d="M307 342.99 H939" stroke="#f1eeea" stroke-width="1"/><path d="M307 353.56 H939" stroke="#f1eeea" stroke-width="1"/><path d="M307 364.12 H939" stroke="#f1eeea" stroke-width="1"/><path d="M307 374.68 H939" stroke="#f1eeea" stroke-width="1"/><path d="M307 385.25 H939" stroke="#f1eeea" stroke-width="1"/><path d="M307 395.81 H939" stroke="#f1eeea" stroke-width="1"/><path d="M307 406.38 H939" stroke="#f1eeea" stroke-width="1"/><path d="M307 416.94 H939" stroke="#e4e1dc" stroke-width="1"/><path d="M307 427.50 H939" stroke="#f1eeea" stroke-width="1"/><path d="M307 438.07 H939" stroke="#f1eeea" stroke-width="1"/><path d="M307 448.63 H939" stroke="#f1eeea" stroke-width="1"/><path d="M307 459.20 H939" stroke="#f1eeea" stroke-width="1"/><path d="M307 469.76 H939" stroke="#f1eeea" stroke-width="1"/><path d="M307 480.32 H939" stroke="#f1eeea" stroke-width="1"/><path d="M307 490.89 H939" stroke="#f1eeea" stroke-width="1"/><path d="M307 501.45 H939" stroke="#f1eeea" stroke-width="1"/><path d="M307 512.02 H939" stroke="#f1eeea" stroke-width="1"/><path d="M307 522.58 H939" stroke="#e4e1dc" stroke-width="1"/><path d="M307 533.14 H939" stroke="#f1eeea" stroke-width="1"/><path d="M307 543.71 H939" stroke="#f1eeea" stroke-width="1"/><path d="M307 554.27 H939" stroke="#f1eeea" stroke-width="1"/><path d="M307 564.84 H939" stroke="#f1eeea" stroke-width="1"/><path d="M307 575.40 H939" stroke="#f1eeea" stroke-width="1"/><path d="M307 585.96 H939" stroke="#f1eeea" stroke-width="1"/><path d="M307 596.53 H939" stroke="#f1eeea" stroke-width="1"/><path d="M307 607.09 H939" stroke="#f1eeea" stroke-width="1"/><path d="M307 617.66 H939" stroke="#f1eeea" stroke-width="1"/><path d="M307 628.22 H939" stroke="#e4e1dc" stroke-width="1"/><path d="M307 638.78 H939" stroke="#f1eeea" stroke-width="1"/><path d="M307 649.35 H939" stroke="#f1eeea" stroke-width="1"/><path d="M307 659.91 H939" stroke="#f1eeea" stroke-width="1"/><path d="M307 670.48 H939" stroke="#f1eeea" stroke-width="1"/>
<path d="M307 36.5 H939 M307 57 H939" stroke="#333" stroke-width="1.2"/>
<path d="M315 36.5 V57 M923 36.5 V57 M619.7 36.5 V57" stroke="#333" stroke-width="1.2"/>
</svg>
<div class="a" style="left:307px;top:37px;width:632px;height:19.5px;background:#fdfcf9;"></div>
<svg style="left:0;top:0" width="944" height="710">
<path d="M307 36.6 H939 M307 57.2 H939" stroke="#2a2a2a" stroke-width="1.3"/>
<path d="M315.2 36.6 V57 M922.8 36.6 V57 M619.7 36.6 V57" stroke="#2a2a2a" stroke-width="1.3"/>
</svg>
<div class="t" style="left:465.4px;top:42.85px;font:normal 10px/11.50px 'Liberation Serif';color:#222;transform:translateX(-50%) scaleX(1);transform-origin:50% 50%;">2</div>
<div class="t" style="left:769.5px;top:42.85px;font:normal 10px/11.50px 'Liberation Serif';color:#222;transform:translateX(-50%) scaleX(1);transform-origin:50% 50%;">3</div>
<svg style="left:0;top:0" width="944" height="710"><path d="M370.56 310.80 L423.88 310.80" stroke="#3a3a86" stroke-width="1.05" fill="none" stroke-linecap="square"/><path d="M423.88 310.80 L434.44 310.80" stroke="#555555" stroke-width="1.0" fill="none" stroke-linecap="square"/><path d="M466.13 310.80 L476.70 310.80" stroke="#555555" stroke-width="1.0" fill="none" stroke-linecap="square"/><path d="M476.70 310.80 L497.82 310.80" stroke="#3a3a86" stroke-width="1.05" fill="none" stroke-linecap="square"/><path d="M497.82 310.80 L508.39 310.80" stroke="#555555" stroke-width="1.0" fill="none" stroke-linecap="square"/><path d="M540.08 310.80 L550.64 310.80" stroke="#555555" stroke-width="1.0" fill="none" stroke-linecap="square"/><path d="M550.64 310.80 L635.16 310.80" stroke="#3a3a86" stroke-width="1.05" fill="none" stroke-linecap="square"/><path d="M635.16 310.80 L656.28 310.80" stroke="#555555" stroke-width="1.0" fill="none" stroke-linecap="square"/><path d="M487.26 310.80 L487.26 236.85 L534.80 236.85" stroke="#3a3a86" stroke-width="1.05" fill="none" stroke-linecap="square"/><path d="M534.80 236.85 L543.25 236.85" stroke="#555555" stroke-width="1.0" fill="none" stroke-linecap="square"/><path d="M547.47 236.85 L555.93 236.85" stroke="#555555" stroke-width="1.0" fill="none" stroke-linecap="square"/><path d="M555.93 236.85 L761.92 236.85 L761.92 405.88 L614.03 405.88 L614.03 331.93 L635.16 331.93" stroke="#3a3a86" stroke-width="1.05" fill="none" stroke-linecap="square"/><path d="M635.16 331.93 L656.28 331.93" stroke="#555555" stroke-width="1.0" fill="none" stroke-linecap="square"/><path d="M698.54 321.36 L709.10 321.36" stroke="#555555" stroke-width="1.0" fill="none" stroke-linecap="square"/><path d="M709.10 321.36 L761.92 321.36" stroke="#3a3a86" stroke-width="1.05" fill="none" stroke-linecap="square"/><path d="M561.21 310.80 L561.21 337.21" stroke="#3a3a86" stroke-width="1.05" fill="none" stroke-linecap="square"/><path d="M561.21 337.21 L561.21 345.66" stroke="#555555" stroke-width="1.0" fill="none" stroke-linecap="square"/><path d="M561.21 349.89 L561.21 363.62" stroke="#555555" stroke-width="1.0" fill="none" stroke-linecap="square"/><path d="M561.21 363.62 L561.21 374.18" stroke="#8e2b2b" stroke-width="1.0" fill="none" stroke-linecap="square"/><path d="M434.44 310.80 L437.14 307.80 L443.94 314.10 L450.84 307.80 L457.24 314.10 L463.44 307.80 L466.14 310.80" stroke="#3a3ad2" stroke-width="1.05" fill="none" stroke-linecap="square"/><path d="M508.39 310.80 L511.09 307.80 L517.89 314.10 L524.79 307.80 L531.19 314.10 L537.39 307.80 L540.09 310.80" stroke="#3a3ad2" stroke-width="1.05" fill="none" stroke-linecap="square"/><path d="M543.36 228.35 L543.36 245.35" stroke="#3a3ad2" stroke-width="1.2" fill="none" stroke-linecap="square"/><path d="M547.36 228.35 L547.36 245.35" stroke="#3a3ad2" stroke-width="1.2" fill="none" stroke-linecap="square"/><path d="M552.71 345.77 L569.71 345.77" stroke="#3a3ad2" stroke-width="1.2" fill="none" stroke-linecap="square"/><path d="M552.71 349.77 L569.71 349.77" stroke="#3a3ad2" stroke-width="1.2" fill="none" stroke-linecap="square"/><circle cx="487.26" cy="310.80" r="2.7" fill="#22227e"/><circle cx="561.21" cy="310.80" r="2.7" fill="#22227e"/><circle cx="761.92" cy="321.36" r="2.7" fill="#22227e"/><path d="M371.06 363.68 L371.06 374.18" stroke="#8e2b2b" stroke-width="1.1" fill="none" stroke-linecap="square"/><path d="M360.56 374.18 L381.56 374.18" stroke="#8e2b2b" stroke-width="1.1" fill="none" stroke-linecap="square"/><path d="M364.86 377.28 L377.26 377.28" stroke="#8e2b2b" stroke-width="1.1" fill="none" stroke-linecap="square"/><path d="M367.76 380.38 L374.36 380.38" stroke="#8e2b2b" stroke-width="1.1" fill="none" stroke-linecap="square"/><path d="M370.06 383.48 L372.06 383.48" stroke="#8e2b2b" stroke-width="1.1" fill="none" stroke-linecap="square"/><path d="M561.21 363.68 L561.21 374.18" stroke="#8e2b2b" stroke-width="1.1" fill="none" stroke-linecap="square"/><path d="M550.71 374.18 L571.71 374.18" stroke="#8e2b2b" stroke-width="1.1" fill="none" stroke-linecap="square"/><path d="M555.01 377.28 L567.41 377.28" stroke="#8e2b2b" stroke-width="1.1" fill="none" stroke-linecap="square"/><path d="M557.91 380.38 L564.51 380.38" stroke="#8e2b2b" stroke-width="1.1" fill="none" stroke-linecap="square"/><path d="M560.21 383.48 L562.21 383.48" stroke="#8e2b2b" stroke-width="1.1" fill="none" stroke-linecap="square"/><path d="M835.87 279.17 L835.87 289.67" stroke="#8e2b2b" stroke-width="1.1" fill="none" stroke-linecap="square"/><path d="M825.37 289.67 L846.37 289.67" stroke="#8e2b2b" stroke-width="1.1" fill="none" stroke-linecap="square"/><path d="M829.67 292.77 L842.07 292.77" stroke="#8e2b2b" stroke-width="1.1" fill="none" stroke-linecap="square"/><path d="M832.57 295.87 L839.17 295.87" stroke="#8e2b2b" stroke-width="1.1" fill="none" stroke-linecap="square"/><path d="M834.87 298.97 L836.87 298.97" stroke="#8e2b2b" stroke-width="1.1" fill="none" stroke-linecap="square"/><path d="M835.87 405.94 L835.87 416.44" stroke="#8e2b2b" stroke-width="1.1" fill="none" stroke-linecap="square"/><path d="M825.37 416.44 L846.37 416.44" stroke="#8e2b2b" stroke-width="1.1" fill="none" stroke-linecap="square"/><path d="M829.67 419.54 L842.07 419.54" stroke="#8e2b2b" stroke-width="1.1" fill="none" stroke-linecap="square"/><path d="M832.57 422.64 L839.17 422.64" stroke="#8e2b2b" stroke-width="1.1" fill="none" stroke-linecap="square"/><path d="M834.87 425.74 L836.87 425.74" stroke="#8e2b2b" stroke-width="1.1" fill="none" stroke-linecap="square"/><path d="M371.06 310.80 L371.06 331.93" stroke="#555555" stroke-width="1.0" fill="none" stroke-linecap="square"/><path d="M371.06 353.06 L371.06 363.62" stroke="#555555" stroke-width="1.0" fill="none" stroke-linecap="square"/><circle cx="371.06" cy="342.49" r="10.6" fill="#f8f4b2" stroke="#5e5e3c" stroke-width="1.1"/><path d="M368.76 336.49 h4.6 M371.06 334.19 v4.6" stroke="#222" stroke-width="1.1"/><path d="M369.06 348.49 h4" stroke="#333" stroke-width="1.3"/><path d="M830.57 226.29 L841.17 226.29" stroke="#8e2b2b" stroke-width="1.05" fill="none" stroke-linecap="square"/><path d="M835.87 226.29 L835.87 236.85" stroke="#8e2b2b" stroke-width="1.0" fill="none" stroke-linecap="square"/><path d="M835.87 236.85 L835.87 247.42" stroke="#555555" stroke-width="1.0" fill="none" stroke-linecap="square"/><path d="M835.87 268.54 L835.87 279.11" stroke="#555555" stroke-width="1.0" fill="none" stroke-linecap="square"/><circle cx="835.87" cy="257.98" r="10.6" fill="#f8f4b2" stroke="#5e5e3c" stroke-width="1.1"/><path d="M833.57 263.98 h4.6 M835.87 261.68 v4.6" stroke="#222" stroke-width="1.1"/><path d="M833.87 251.98 h4" stroke="#333" stroke-width="1.3"/><path d="M830.57 353.06 L841.17 353.06" stroke="#8e2b2b" stroke-width="1.05" fill="none" stroke-linecap="square"/><path d="M835.87 353.06 L835.87 363.62" stroke="#8e2b2b" stroke-width="1.0" fill="none" stroke-linecap="square"/><path d="M835.87 363.62 L835.87 374.18" stroke="#555555" stroke-width="1.0" fill="none" stroke-linecap="square"/><path d="M835.87 395.31 L835.87 405.88" stroke="#555555" stroke-width="1.0" fill="none" stroke-linecap="square"/><circle cx="835.87" cy="384.75" r="10.6" fill="#f8f4b2" stroke="#5e5e3c" stroke-width="1.1"/><path d="M833.57 378.75 h4.6 M835.87 376.45 v4.6" stroke="#222" stroke-width="1.1"/><path d="M833.87 390.75 h4" stroke="#333" stroke-width="1.3"/><path d="M656.28 300.24 L698.54 321.36 L656.28 342.49 Z" stroke="#3a3ad2" stroke-width="1.0" fill="none"/><path d="M660.28 310.80 h6 M663.28 307.80 v6 M660.28 331.93 h6" stroke="#3a3ad2" stroke-width="1.1"/><path d="M650.28 308.50 L656.28 310.80 L650.28 313.10 Z" stroke="#444" stroke-width="0.9" fill="#fdfcf9"/><path d="M650.28 329.63 L656.28 331.93 L650.28 334.23 Z" stroke="#444" stroke-width="0.9" fill="#fdfcf9"/><path d="M698.54 319.06 L704.54 321.36 L698.54 323.66 Z" stroke="#444" stroke-width="0.9" fill="#fdfcf9"/><path d="M635.16 289.67 L656.28 289.67" stroke="#3a3a3a" stroke-width="0.9" fill="none" stroke-linecap="square"/><path d="M656.28 289.67 L665.88 304.99" stroke="#3a3ad2" stroke-width="1.0" fill="none" stroke-linecap="square"/><path d="M635.16 353.06 L656.28 353.06" stroke="#3a3a3a" stroke-width="0.9" fill="none" stroke-linecap="square"/><path d="M656.28 353.06 L665.88 337.74" stroke="#3a3ad2" stroke-width="1.0" fill="none" stroke-linecap="square"/><path d="M688.01 315.55 L699.54 300.24" stroke="#3a3ad2" stroke-width="1.0" fill="none" stroke-linecap="square"/><path d="M699.54 300.24 L719.67 300.24" stroke="#3a3a3a" stroke-width="0.9" fill="none" stroke-linecap="square"/><path d="M677.41 268.54 L677.41 279.11" stroke="#8e2b2b" stroke-width="1.0" fill="none" stroke-linecap="square"/><path d="M677.41 279.11 L677.41 300.24" stroke="#444" stroke-width="1.0" fill="none" stroke-linecap="square"/><path d="M677.41 300.24 L677.41 310.80" stroke="#3a3ad2" stroke-width="1.0" fill="none" stroke-linecap="square"/><path d="M677.41 331.93 L677.41 342.49" stroke="#3a3ad2" stroke-width="1.0" fill="none" stroke-linecap="square"/><path d="M677.41 342.49 L677.41 363.62" stroke="#444" stroke-width="1.0" fill="none" stroke-linecap="square"/><path d="M677.41 363.62 L677.41 374.18" stroke="#8e2b2b" stroke-width="1.0" fill="none" stroke-linecap="square"/><path d="M672.11 268.54 L682.71 268.54" stroke="#8e2b2b" stroke-width="1.05" fill="none" stroke-linecap="square"/><path d="M672.11 374.18 L682.71 374.18" stroke="#8e2b2b" stroke-width="1.05" fill="none" stroke-linecap="square"/><rect x="360.5" y="319.5" width="21.0" height="46.5" stroke="#5fd35f" stroke-width="0.9" stroke-dasharray="1.6 1.4" fill="none"/><rect x="357.3" y="316.3" width="6.4" height="6.4" fill="#1ee81e" stroke="#0f5a0f" stroke-width="0.9"/><rect x="357.3" y="362.8" width="6.4" height="6.4" fill="#1ee81e" stroke="#0f5a0f" stroke-width="0.9"/><rect x="378.3" y="316.3" width="6.4" height="6.4" fill="#1ee81e" stroke="#0f5a0f" stroke-width="0.9"/><rect x="378.3" y="362.8" width="6.4" height="6.4" fill="#1ee81e" stroke="#0f5a0f" stroke-width="0.9"/><path d="M424.5 349 L438.2 342.3 L434.5 347.4 L464 347.4 L464 350.6 L434.5 350.6 L438.2 355.7 Z" fill="#f07a1c"/></svg>
<div class="t" style="left:381.8px;top:301.14px;font:normal 9.5px/10.92px 'Liberation Serif';color:#8e2b2b;will-change:transform;-webkit-text-stroke:0.1px #8e2b2b;">IN</div>
<div class="t" style="left:381.8px;top:333.34px;font:normal 9.5px/10.92px 'Liberation Serif';color:#22227e;will-change:transform;-webkit-text-stroke:0.1px #22227e;">VS1</div>
<div class="t" style="left:381.8px;top:344.54px;font:normal 9.5px/10.92px 'Liberation Serif';color:#22227e;will-change:transform;-webkit-text-stroke:0.1px #22227e;">Stim Sine</div>
<div class="t" style="left:371px;top:386.44px;font:normal 9.5px/10.92px 'Liberation Serif';color:#8e2b2b;transform:translateX(-50%) scaleX(1.0);transform-origin:50% 50%;will-change:transform;-webkit-text-stroke:0.1px #8e2b2b;">GND</div>
<div class="t" style="left:433.8px;top:295.16px;font:normal 10.5px/12.07px 'Liberation Sans';color:#22227e;transform:scaleX(0.86);transform-origin:0 50%;will-change:transform;-webkit-text-stroke:0.1px #22227e;">R1</div>
<div class="t" style="left:434px;top:316.14px;font:normal 9.5px/10.92px 'Liberation Serif';color:#22227e;will-change:transform;-webkit-text-stroke:0.1px #22227e;">100k</div>
<div class="t" style="left:508.4px;top:295.36px;font:normal 10.5px/12.07px 'Liberation Sans';color:#22227e;transform:scaleX(0.86);transform-origin:0 50%;will-change:transform;-webkit-text-stroke:0.1px #22227e;">R2</div>
<div class="t" style="left:508.4px;top:316.74px;font:normal 9.5px/10.92px 'Liberation Serif';color:#22227e;will-change:transform;-webkit-text-stroke:0.1px #22227e;">100k</div>
<div class="t" style="left:539.2px;top:216.56px;font:normal 10.5px/12.07px 'Liberation Sans';color:#22227e;transform:scaleX(0.86);transform-origin:0 50%;will-change:transform;-webkit-text-stroke:0.1px #22227e;">C2</div>
<div class="t" style="left:539.6px;top:248.24px;font:normal 9.5px/10.92px 'Liberation Serif';color:#22227e;will-change:transform;-webkit-text-stroke:0.1px #22227e;">200pF</div>
<div class="t" style="left:582.4px;top:301.34px;font:normal 9.5px/10.92px 'Liberation Serif';color:#8e2b2b;will-change:transform;-webkit-text-stroke:0.1px #8e2b2b;">UPOS</div>
<div class="t" style="left:571.1px;top:340.76px;font:normal 10.5px/12.07px 'Liberation Sans';color:#22227e;transform:scaleX(0.86);transform-origin:0 50%;will-change:transform;-webkit-text-stroke:0.1px #22227e;">C1</div>
<div class="t" style="left:571.1px;top:354.14px;font:normal 9.5px/10.92px 'Liberation Serif';color:#22227e;will-change:transform;-webkit-text-stroke:0.1px #22227e;">42pF</div>
<div class="t" style="left:561.2px;top:385.74px;font:normal 9.5px/10.92px 'Liberation Serif';color:#8e2b2b;transform:translateX(-50%) scaleX(1.0);transform-origin:50% 50%;will-change:transform;-webkit-text-stroke:0.1px #8e2b2b;">GND</div>
<div class="t" style="left:721.6px;top:279.44px;font:normal 9.5px/10.92px 'Liberation Serif';color:#22227e;will-change:transform;-webkit-text-stroke:0.1px #22227e;">U1</div>
<div class="t" style="left:721.6px;top:289.54px;font:normal 9.5px/10.92px 'Liberation Serif';color:#22227e;will-change:transform;-webkit-text-stroke:0.1px #22227e;">LF411CN</div>
<div class="t" style="left:730.2px;top:312.14px;font:normal 9.5px/10.92px 'Liberation Serif';color:#8e2b2b;will-change:transform;-webkit-text-stroke:0.1px #8e2b2b;">OUT</div>
<div class="t" style="left:677.4px;top:259.24px;font:normal 9.5px/10.92px 'Liberation Serif';color:#8e2b2b;transform:translateX(-50%) scaleX(1.0);transform-origin:50% 50%;will-change:transform;-webkit-text-stroke:0.1px #8e2b2b;">V-</div>
<div class="t" style="left:677.4px;top:375.74px;font:normal 9.5px/10.92px 'Liberation Serif';color:#8e2b2b;transform:translateX(-50%) scaleX(1.0);transform-origin:50% 50%;will-change:transform;-webkit-text-stroke:0.1px #8e2b2b;">V+</div>
<div class="t" style="left:646.2px;top:280.43px;font:normal 9px/10.35px 'Liberation Serif';color:#222;transform:translateX(-50%) scaleX(1.0);transform-origin:50% 50%;will-change:transform;-webkit-text-stroke:0.1px #222;">5</div>
<div class="t" style="left:645.7px;top:301.93px;font:normal 9px/10.35px 'Liberation Serif';color:#222;transform:translateX(-50%) scaleX(1.0);transform-origin:50% 50%;will-change:transform;-webkit-text-stroke:0.1px #222;">3</div>
<div class="t" style="left:645px;top:322.82px;font:normal 9px/10.35px 'Liberation Serif';color:#222;transform:translateX(-50%) scaleX(1.0);transform-origin:50% 50%;will-change:transform;-webkit-text-stroke:0.1px #222;">2</div>
<div class="t" style="left:646px;top:344.43px;font:normal 9px/10.35px 'Liberation Serif';color:#222;transform:translateX(-50%) scaleX(1.0);transform-origin:50% 50%;will-change:transform;-webkit-text-stroke:0.1px #222;">1</div>
<div class="t" style="left:709.8px;top:291.43px;font:normal 9px/10.35px 'Liberation Serif';color:#222;transform:translateX(-50%) scaleX(1.0);transform-origin:50% 50%;will-change:transform;-webkit-text-stroke:0.1px #222;">8</div>
<div class="t" style="left:709.8px;top:311.73px;font:normal 9px/10.35px 'Liberation Serif';color:#222;transform:translateX(-50%) scaleX(1.0);transform-origin:50% 50%;will-change:transform;-webkit-text-stroke:0.1px #222;">6</div>
<div class="t" style="left:669.5px;top:284px;font:9px/10px 'Liberation Serif';color:#222;transform:rotate(-90deg)">4</div>
<div class="t" style="left:669.5px;top:348px;font:9px/10px 'Liberation Serif';color:#222;transform:rotate(-90deg)">7</div>
<div class="t" style="left:835.9px;top:216.84px;font:normal 9.5px/10.92px 'Liberation Serif';color:#8e2b2b;transform:translateX(-50%) scaleX(1.0);transform-origin:50% 50%;will-change:transform;-webkit-text-stroke:0.1px #8e2b2b;">V-</div>
<div class="t" style="left:847.3px;top:248.44px;font:normal 9.5px/10.92px 'Liberation Serif';color:#22227e;will-change:transform;-webkit-text-stroke:0.1px #22227e;">V-</div>
<div class="t" style="left:847.3px;top:259.84px;font:normal 9.5px/10.92px 'Liberation Serif';color:#22227e;will-change:transform;-webkit-text-stroke:0.1px #22227e;">VSRC</div>
<div class="t" style="left:835.9px;top:301.14px;font:normal 9.5px/10.92px 'Liberation Serif';color:#8e2b2b;transform:translateX(-50%) scaleX(1.0);transform-origin:50% 50%;will-change:transform;-webkit-text-stroke:0.1px #8e2b2b;">GND</div>
<div class="t" style="left:835.9px;top:344.24px;font:normal 9.5px/10.92px 'Liberation Serif';color:#8e2b2b;transform:translateX(-50%) scaleX(1.0);transform-origin:50% 50%;will-change:transform;-webkit-text-stroke:0.1px #8e2b2b;">V+</div>
<div class="t" style="left:846.5px;top:375.64px;font:normal 9.5px/10.92px 'Liberation Serif';color:#22227e;will-change:transform;-webkit-text-stroke:0.1px #22227e;">V+</div>
<div class="t" style="left:846.5px;top:385.64px;font:normal 9.5px/10.92px 'Liberation Serif';color:#22227e;will-change:transform;-webkit-text-stroke:0.1px #22227e;">VSRC</div>
<div class="t" style="left:835.9px;top:428.34px;font:normal 9.5px/10.92px 'Liberation Serif';color:#8e2b2b;transform:translateX(-50%) scaleX(1.0);transform-origin:50% 50%;will-change:transform;-webkit-text-stroke:0.1px #8e2b2b;">GND</div>
<div class="a" style="left:475.8px;top:25.2px;width:293.4px;height:19.4px;background:#3c3c3c;border-radius:3.5px;box-shadow:0 0 1px #222"></div>
<svg style="left:0;top:0" width="944" height="60"><path d="M483.1 29.7 h10.1 l-3.6 4.3 v4.3 h-2.9 v-4.3 z" fill="#a9dcef"/><path d="M503.8 34 h9.6 M508.6 29.2 v9.6" stroke="#7090d4" stroke-width="0.9"/><rect x="524.6" y="29.7" width="10.2" height="9.3" stroke="#6a8cd0" stroke-width="0.9" stroke-dasharray="1.2 1.6" fill="none"/><path d="M546.4 29.5 v9.5" stroke="#b8d4f0" stroke-width="1.3"/><rect x="548" y="30" width="4.5" height="2" fill="#e06060"/><rect x="548" y="33.4" width="7" height="2.6" fill="#a8d0f0"/><rect x="548" y="37.3" width="3.5" height="1" fill="#aaa"/><path d="M560.4 28 v14" stroke="#2a2a2a" stroke-width="1"/><rect x="569.2" y="29.6" width="5.2" height="9.6" fill="#f4d27a"/><path d="M566.6 31 h2 M566.6 33.4 h2 M566.6 35.8 h2 M566.6 38.2 h2 M575 31 h2 M575 33.4 h2 M575 35.8 h2 M575 38.2 h2" stroke="#d8a850" stroke-width="0.7"/><path d="M586.4 32 q2.8 -2 5.6 0 t5.6 0 M586.4 36 q2.8 -2 5.6 0 t5.6 0" stroke="#6fa3d8" stroke-width="1.3" fill="none"/><path d="M612.2 28.8 v5.5" stroke="#c8503c" stroke-width="1.2"/><path d="M606.6 34.3 h11.4 l-3 3.2 h-5.4 z M610 38.2 h4.4 l-1 1 h-2.4 z" fill="#c8503c"/><rect x="626.8" y="29" width="2.6" height="10.5" fill="#b0d0f4"/><path d="M629.5 34.3 h3 M633 36.5 l1.5 -4 M635.3 36.5 l1.5 -4 M637.6 36.5 l1.5 -4" stroke="#5a8ad0" stroke-width="0.9"/><rect x="649.5" y="30.6" width="9.8" height="7.8" fill="none" stroke="#6a9ad8" stroke-width="1" stroke-dasharray="1.2 0.8"/><rect x="650.8" y="31.8" width="7.2" height="5.4" fill="#5cc07a" stroke="#2a6a5a" stroke-width="0.5"/><path d="M668.3 31.1 h9 l2.6 3.2 l-2.6 3.2 h-9 z" fill="#e8c860"/><text x="669.3" y="36.6" font-family="Liberation Sans" font-weight="bold" font-size="5.5" fill="#4a3a10">D1</text><circle cx="695.5" cy="34.3" r="5.2" stroke="#c85050" stroke-width="1.1" fill="none"/><path d="M695.5 31.5 v5 M688.5 34.3 h1.8" stroke="#c85050" stroke-width="1"/><text x="715.5" y="39.5" text-anchor="middle" font-family="Liberation Serif" font-weight="bold" font-size="13" fill="#5a9ad8">A</text><path d="M731.2 38.8 a5.2 5.2 0 1 1 9.8 0" stroke="#4a7ab8" stroke-width="1.1" fill="none"/><path d="M752.3 34.5 L756.7 30.3 L761.1 34.5 L756.7 38.7 Z" fill="#f0c040" stroke="#f0c040" stroke-width="0.8" stroke-linejoin="round"/><path d="M749.5 34.5 h2.5 M761.5 34.5 h2.5" stroke="#d8a840" stroke-width="1"/><path d="M519 40.2 v3.6 h-3.6 z" fill="#d8d8d8"/><path d="M539.3 40.2 v3.6 h-3.6 z" fill="#d8d8d8"/><path d="M559.7 40.2 v3.6 h-3.6 z" fill="#d8d8d8"/><path d="M602.1 40.2 v3.6 h-3.6 z" fill="#d8d8d8"/><path d="M622.3 40.2 v3.6 h-3.6 z" fill="#d8d8d8"/><path d="M643.1 40.2 v3.6 h-3.6 z" fill="#d8d8d8"/><path d="M663.3 40.2 v3.6 h-3.6 z" fill="#d8d8d8"/><path d="M684 40.2 v3.6 h-3.6 z" fill="#d8d8d8"/><path d="M704.6 40.2 v3.6 h-3.6 z" fill="#d8d8d8"/><path d="M725.2 40.2 v3.6 h-3.6 z" fill="#d8d8d8"/><path d="M745.8 40.2 v3.6 h-3.6 z" fill="#d8d8d8"/><path d="M766.4 40.2 v3.6 h-3.6 z" fill="#d8d8d8"/></svg>
<div class="a" style="left:307px;top:672.7px;width:632px;height:16px;background:#353535;"></div>
<div class="a" style="left:307.8px;top:673.4px;width:31.2px;height:12.6px;background:#444444;"></div>
<div class="t" style="left:323.7px;top:674.84px;font:normal 9.5px/10.92px 'Liberation Sans';color:#eeeeee;transform:translateX(-50%) scaleX(0.89);transform-origin:50% 50%;-webkit-text-stroke:0.25px #eeeeee;">Editor</div>
<div class="a" style="left:339px;top:673.4px;width:22px;height:12.6px;background:#363636;"></div>
<div class="t" style="left:352px;top:674.84px;font:normal 9.5px/10.92px 'Liberation Sans';color:#dddddd;transform:translateX(-50%) scaleX(0.89);transform-origin:50% 50%;-webkit-text-stroke:0.25px #dddddd;">Filt</div>
<div class="a" style="left:939px;top:4px;width:2px;height:685px;background:#353535;"></div>
<div class="a" style="left:941px;top:0px;width:3px;height:689px;background:#474747;"></div>
<div class="a" style="left:3px;top:688px;width:941px;height:1px;background:#363636;"></div>
<div class="a" style="left:3px;top:689px;width:938px;height:17.7px;background:#404040;"></div>
<div class="a" style="left:0px;top:706.7px;width:944px;height:3.3px;background:#4a4a4a;"></div>
<div class="a" style="left:0px;top:0px;width:3px;height:710px;background:#4a4a4a;"></div>
<div class="t" style="left:7.4px;top:692.74px;font:normal 9.5px/10.92px 'Liberation Sans';color:#dcdcdc;transform:scaleX(0.828);transform-origin:0 50%;-webkit-text-stroke:0.25px #dcdcdc;">X:8700.000mil Y:5500.000mil</div>
<div class="t" style="left:118.7px;top:692.74px;font:normal 9.5px/10.92px 'Liberation Sans';color:#dcdcdc;transform:scaleX(0.86);transform-origin:0 50%;-webkit-text-stroke:0.25px #dcdcdc;">Grid:100mil</div>
<div class="a" style="left:301.5px;top:691px;width:1px;height:14px;background:#333;"></div>
<div class="a" style="left:599.2px;top:691px;width:1px;height:14px;background:#333;"></div>
<div class="a" style="left:906px;top:692.7px;width:31px;height:12px;background:#505050;border:1px solid #2e2e2e;border-radius:3px"></div>
<div class="t" style="left:921.5px;top:693.94px;font:normal 9.5px/10.92px 'Liberation Sans';color:#e6e6e6;transform:translateX(-50%) scaleX(0.82);transform-origin:50% 50%;-webkit-text-stroke:0.25px #e6e6e6;">Panels</div>
</body></html>
